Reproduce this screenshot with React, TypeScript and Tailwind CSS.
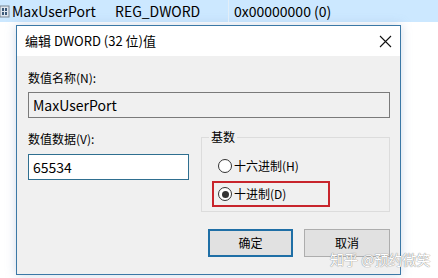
import React from "react";

const font = { fontFamily: '"Noto Sans CJK SC", "Noto Sans", sans-serif' };

function Radio({ checked }: { checked?: boolean }) {
  return (
    <span className="flex h-[14px] w-[14px] items-center justify-center rounded-full border border-[#333333] bg-white">
      {checked ? <span className="h-[7px] w-[7px] rounded-full bg-[#333333]" /> : null}
    </span>
  );
}

export default function App() {
  return (
    <div
      className="relative h-[278px] w-[438px] overflow-hidden bg-white text-[12px] leading-[16px] text-black"
      style={font}
    >
      {/* registry row */}
      <div className="flex h-[22px] items-center bg-[#cce8ff] text-[14px]">
        <svg width="10" height="13" viewBox="0 0 10 13" className="mr-[2px] shrink-0">
          <rect x="0" y="1" width="9" height="11" fill="#dfe6ee" stroke="#7a8794" strokeWidth="1" />
          <rect x="2" y="3" width="2" height="3" fill="#3d5a78" />
          <rect x="5" y="3" width="2" height="3" fill="#3d5a78" />
          <rect x="2" y="7" width="2" height="3" fill="#3d5a78" />
          <rect x="5" y="7" width="2" height="3" fill="#3d5a78" />
        </svg>
        <span className="w-[103px] shrink-0">MaxUserPort</span>
        <span className="w-[113px] shrink-0">REG_DWORD</span>
        <span className="h-full w-px shrink-0 bg-[#e2eef8]" />
        <span className="ml-[5px] whitespace-nowrap">0x00000000 (0)</span>
      </div>

      {/* dialog */}
      <div className="ml-[16px] mt-[3px] flex h-[250px] w-[385px] flex-col border border-[#3b78a6] bg-[#f0f0f0] shadow-[0_0_10px_rgba(120,150,190,0.35)]">
        <div className="flex h-[30px] items-center justify-between bg-white pl-[8px] pr-[8px] text-[13px]">
          <span>编辑 DWORD (32 位)值</span>
          <svg width="13" height="13" viewBox="0 0 13 13">
            <path d="M1 1 L12 12 M12 1 L1 12" stroke="#111" strokeWidth="1.1" />
          </svg>
        </div>

        <div className="flex flex-col pl-[11px] pr-[9px]">
          <div className="mt-[14px]">数值名称(N):</div>
          <div className="mt-[6px] flex h-[26px] w-[362px] items-center border border-[#7a7a7a] bg-[#f0f0f0] pl-[4px] text-[14px]">
            MaxUserPort
          </div>

          <div className="mt-[11px] flex gap-[12px]">
            <div className="flex w-[161px] flex-col">
              <div className="mt-[2px]">数值数据(V):</div>
              <div className="mt-[7px] flex h-[26px] items-center border border-[#2f6f90] bg-white pl-[4px] text-[14px]">
                65534
              </div>
            </div>

            <fieldset className="h-[83px] w-[189px] border border-[#dcdcdc] p-0">
              <legend className="ml-[7px] px-[2px]">基数</legend>
              <div className="ml-[16px] mt-[11px] flex h-[20px] items-center gap-[2px]">
                <Radio />
                <span>十六进制(H)</span>
              </div>
              <div className="ml-[10px] mt-[5px] flex h-[26px] w-[118px] items-center gap-[2px] border-2 border-[#c8252c] pl-[4px]">
                <Radio checked />
                <span>十进制(D)</span>
              </div>
            </fieldset>
          </div>

          <div className="mt-[17px] flex justify-end gap-[11px] pr-[1px]">
            <div className="flex h-[28px] w-[85px] items-center justify-center border-2 border-[#1f6fa6] bg-[#e1e1e1]">
              确定
            </div>
            <div className="flex h-[28px] w-[86px] items-center justify-center border border-[#adadad] bg-[#e1e1e1]">
              取消
            </div>
          </div>
        </div>
      </div>

      <div className="absolute left-[330px] top-[251px] whitespace-nowrap text-[14px] leading-[17px] text-white [text-shadow:0_0_1px_#888,0_0_1px_#888]">
        知乎 @预约微笑
      </div>
    </div>
  );
}
